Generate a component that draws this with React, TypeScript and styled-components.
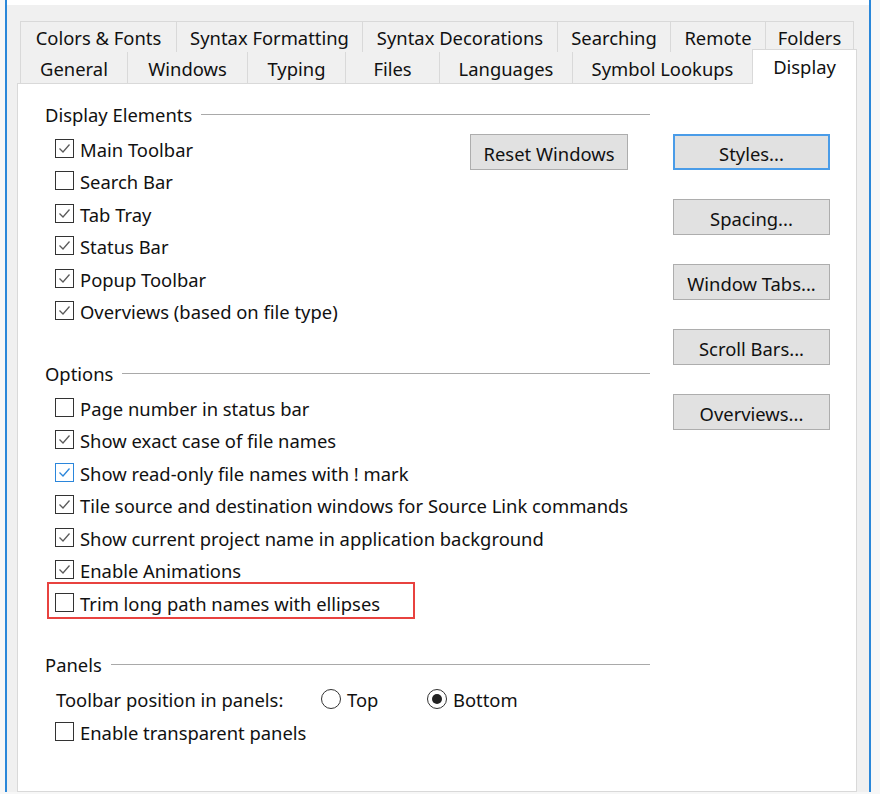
import React from 'react'
import styled, { createGlobalStyle } from 'styled-components'

const GlobalStyle = createGlobalStyle`
  html, body {
    margin: 0;
    padding: 0;
    background: #f7f7f7;
  }
  body {
    font-family: "Noto Sans", "Open Sans", sans-serif;
    font-size: 18.4px;
    color: #111111;
  }
`

type TabDef = { label: string; width: number; selected?: boolean }

const backRow: TabDef[] = [
  { label: 'Colors & Fonts', width: 156 },
  { label: 'Syntax Formatting', width: 186 },
  { label: 'Syntax Decorations', width: 195 },
  { label: 'Searching', width: 113 },
  { label: 'Remote', width: 95 },
  { label: 'Folders', width: 88 },
]

const frontRow: TabDef[] = [
  { label: 'General', width: 107 },
  { label: 'Windows', width: 120 },
  { label: 'Typing', width: 98 },
  { label: 'Files', width: 94 },
  { label: 'Languages', width: 133 },
  { label: 'Symbol Lookups', width: 180 },
  { label: 'Display', width: 104, selected: true },
]

type Option = { label: string; checked?: boolean; focused?: boolean; highlight?: boolean }

const displayElements: Option[] = [
  { label: 'Main Toolbar', checked: true },
  { label: 'Search Bar' },
  { label: 'Tab Tray', checked: true },
  { label: 'Status Bar', checked: true },
  { label: 'Popup Toolbar', checked: true },
  { label: 'Overviews (based on file type)', checked: true },
]

const options: Option[] = [
  { label: 'Page number in status bar' },
  { label: 'Show exact case of file names', checked: true },
  { label: 'Show read-only file names with ! mark', checked: true, focused: true },
  { label: 'Tile source and destination windows for Source Link commands', checked: true },
  { label: 'Show current project name in application background', checked: true },
  { label: 'Enable Animations', checked: true },
  { label: 'Trim long path names with ellipses', highlight: true },
]

const sideButtons = ['Styles...', 'Spacing...', 'Window Tabs...', 'Scroll Bars...', 'Overviews...']

const CheckBox = ({ checked, focused }: { checked?: boolean; focused?: boolean }) => (
  <Box $focused={focused}>
    {checked && (
      <svg width="17" height="17" viewBox="0 0 17 17">
        <polyline
          points="3.5,8.5 7,12 13.5,4.5"
          fill="none"
          stroke={focused ? '#2b86db' : '#5a5a5a'}
          strokeWidth="1.3"
        />
      </svg>
    )}
  </Box>
)

const CheckRow = ({ label, checked, focused, highlight }: Option) => (
  <Row $highlight={highlight}>
    <CheckBox checked={checked} focused={focused} />
    <Label>{label}</Label>
  </Row>
)

const SectionHeader = ({ title }: { title: string }) => (
  <Header>
    <Label>{title}</Label>
    <Rule />
  </Header>
)

export default function App() {
  return (
    <>
      <GlobalStyle />
      <Frame>
        <TitleStrip />
        <Body>
          <TabStrip>
            <TabRow>
              {backRow.map((t) => (
                <Tab key={t.label} $width={t.width} $back>
                  {t.label}
                </Tab>
              ))}
            </TabRow>
            <FrontRow>
              {frontRow.map((t) => (
                <Tab key={t.label} $width={t.width} $selected={t.selected}>
                  {t.label}
                </Tab>
              ))}
            </FrontRow>
          </TabStrip>
          <Page>
            <Columns>
              <LeftCol>
                <SectionHeader title="Display Elements" />
                <DisplayBody>
                  <List>
                    {displayElements.map((o) => (
                      <CheckRow key={o.label} {...o} />
                    ))}
                  </List>
                  <ResetButton>Reset Windows</ResetButton>
                </DisplayBody>

                <SectionGap />
                <SectionHeader title="Options" />
                <List>
                  {options.map((o) => (
                    <CheckRow key={o.label} {...o} />
                  ))}
                </List>

                <SectionGap />
                <SectionHeader title="Panels" />
                <List>
                  <Row>
                    <PositionLabel>Toolbar position in panels:</PositionLabel>
                    <RadioOption>
                      <Radio />
                      <Label>Top</Label>
                    </RadioOption>
                    <RadioOption>
                      <Radio $checked />
                      <Label>Bottom</Label>
                    </RadioOption>
                  </Row>
                  <CheckRow label="Enable transparent panels" />
                </List>
              </LeftCol>
              <RightCol>
                {sideButtons.map((b, i) => (
                  <Button key={b} $default={i === 0}>
                    {b}
                  </Button>
                ))}
              </RightCol>
            </Columns>
          </Page>
        </Body>
      </Frame>
    </>
  )
}

const Frame = styled.div`
  margin-left: 5px;
  width: 866px;
  height: 792px;
  box-sizing: border-box;
  border-left: 2px solid #2a87d9;
  border-right: 2px solid #2a87d9;
  background: #f0f0f0;
  display: flex;
  flex-direction: column;
`

const TitleStrip = styled.div`
  height: 6px;
  background: #ffffff;
`

const Body = styled.div`
  flex: 1;
  padding: 16px 12px 0 10px;
  display: flex;
  flex-direction: column;
`

const TabStrip = styled.div`
  padding-left: 3px;
`

const TabRow = styled.div`
  display: flex;
  height: 31px;
`

const FrontRow = styled.div`
  display: flex;
  align-items: flex-end;
  height: 35px;
  margin-top: -3px;
  margin-bottom: -1px;
`

type TabProps = { $width: number; $selected?: boolean; $back?: boolean }

const Tab = styled.div<TabProps>`
  box-sizing: border-box;
  flex: none;
  width: ${({ $width }) => $width + 1}px;
  height: ${({ $selected }) => ($selected ? 35 : 32)}px;
  display: flex;
  align-items: center;
  justify-content: center;
  padding-bottom: ${({ $selected }) => ($selected ? 1 : 0)}px;
  background: ${({ $selected }) => ($selected ? '#ffffff' : '#f0f0f0')};
  border: 1px solid #d9d9d9;
  border-top: ${({ $back, $selected }) => ($back || $selected ? '1px solid #d9d9d9' : 'none')};
  border-bottom: ${({ $back }) => ($back ? '1px solid #d9d9d9' : 'none')};
  margin-right: -1px;
  position: ${({ $selected }) => ($selected ? 'relative' : 'static')};
  z-index: ${({ $selected }) => ($selected ? 2 : 'auto')};
  white-space: nowrap;
`

const Page = styled.div`
  box-sizing: border-box;
  width: 840px;
  height: 709px;
  background: #ffffff;
  border: 1px solid #d9d9d9;
  padding: 13px 0 0 27px;
`

const Columns = styled.div`
  display: flex;
  gap: 23px;
`

const LeftCol = styled.div`
  width: 605px;
  display: flex;
  flex-direction: column;
`

const RightCol = styled.div`
  width: 157px;
  padding-top: 37px;
  display: flex;
  flex-direction: column;
  gap: 29px;
`

const Label = styled.span`
  padding-top: 2px;
`

const Header = styled.div`
  height: 32px;
  display: flex;
  align-items: center;
  gap: 9px;
  margin-bottom: 3px;
`

const Rule = styled.div`
  flex: 1;
  height: 1px;
  background: #a9a9a9;
  margin-top: 2px;
`

const SectionGap = styled.div`
  height: 29px;
`

const DisplayBody = styled.div`
  display: flex;
  justify-content: space-between;
  align-items: flex-start;
`

const List = styled.div`
  display: flex;
  flex-direction: column;
`

const Row = styled.div<{ $highlight?: boolean }>`
  position: relative;
  height: 32.5px;
  display: flex;
  align-items: center;
  gap: 6px;
  padding-left: 10px;
  white-space: nowrap;

  ${({ $highlight }) =>
    $highlight &&
    `
    &::after {
      content: '';
      position: absolute;
      left: 2px;
      top: -4px;
      width: 368px;
      height: 37px;
      box-sizing: border-box;
      border: 2px solid #e8423f;
    }
  `}
`

const Box = styled.div<{ $focused?: boolean }>`
  width: 19px;
  height: 19px;
  box-sizing: border-box;
  flex: none;
  border: 1px solid ${({ $focused }) => ($focused ? '#2b86db' : '#333333')};
  background: #ffffff;
  display: flex;
  align-items: center;
  justify-content: center;
`

const PositionLabel = styled(Label)`
  width: 259px;
  padding-left: 1px;
`

const RadioOption = styled.div`
  width: 100px;
  display: flex;
  align-items: center;
  gap: 6px;
`

const Radio = styled.div<{ $checked?: boolean }>`
  width: 20px;
  height: 20px;
  box-sizing: border-box;
  flex: none;
  border: 1px solid #333333;
  border-radius: 50%;
  background: #ffffff;
  display: flex;
  align-items: center;
  justify-content: center;

  &::after {
    content: '';
    width: 10px;
    height: 10px;
    border-radius: 50%;
    background: ${({ $checked }) => ($checked ? '#222222' : 'transparent')};
  }
`

const Button = styled.div<{ $default?: boolean }>`
  box-sizing: border-box;
  width: 157px;
  height: 36px;
  display: flex;
  align-items: center;
  justify-content: center;
  padding-top: 2px;
  background: #e1e1e1;
  border: ${({ $default }) => ($default ? '2px solid #4a9ce8' : '1px solid #adadad')};
`

const ResetButton = styled(Button)`
  width: 158px;
  margin-top: 2px;
  margin-right: 22px;
`
